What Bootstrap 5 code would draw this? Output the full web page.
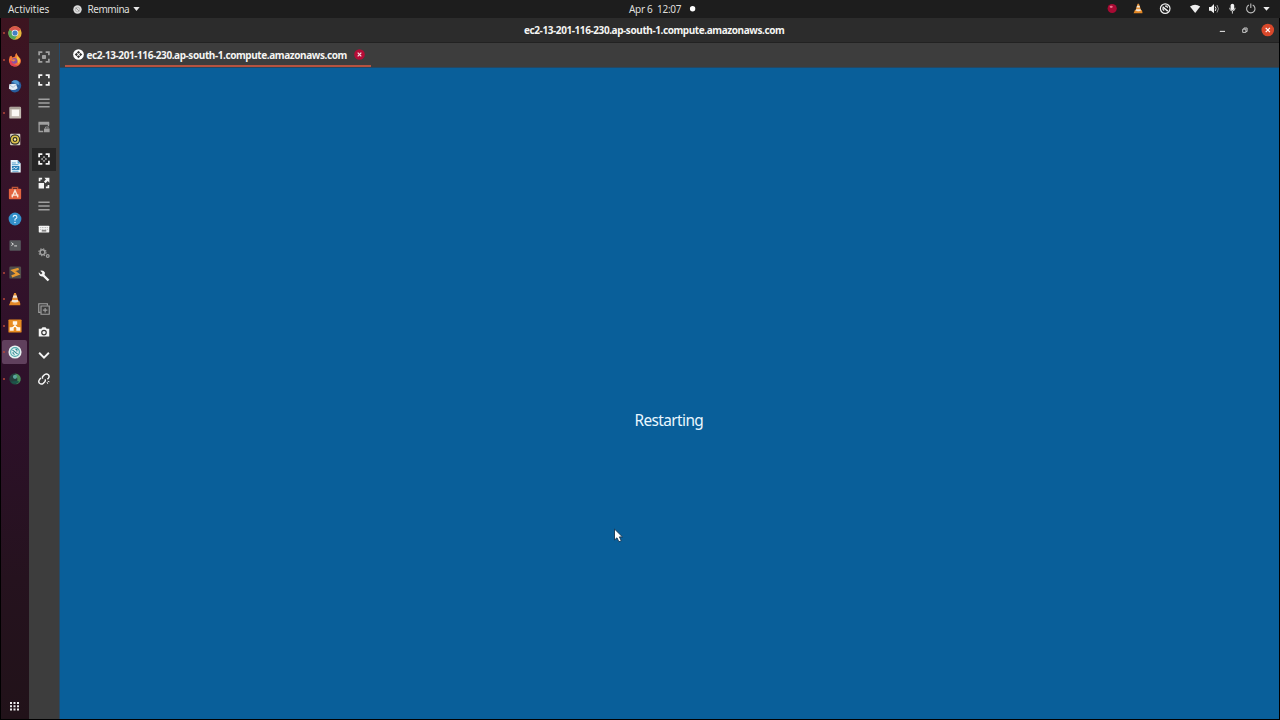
<!DOCTYPE html>
<html lang="en">
<head>
<meta charset="utf-8">
<title>Remmina</title>
<link href="https://cdn.jsdelivr.net/npm/bootstrap@5.3.0/dist/css/bootstrap.min.css" rel="stylesheet">
<style>
body{width:1280px;height:720px;overflow:hidden;background:#000;color:#dfdfdc;font-family:"Noto Sans","Open Sans",sans-serif;font-size:10px;line-height:1}
svg{display:block;flex:none}
.topbar{height:18px;background:#1d1d1d;white-space:nowrap}
.topbar .start{width:620px;padding-left:8px}
.activities{width:65px;letter-spacing:-.03px}
.app-name{margin-left:5.5px;letter-spacing:-.45px}
.clock{padding-left:9px;letter-spacing:-.3px}
.main{height:702px;padding:0 1px 1px}
.dock{width:28px;padding-top:1.6px;background:linear-gradient(#3d1420 0,#35132a 25%,#2d102a 55%,#25121e 80%,#211219 100%)}
.dock-item{height:26.63px;width:28px;padding-right:1px}
.dock-item.running::before{content:"";position:absolute;left:1.5px;top:12.3px;width:2px;height:2px;border-radius:50%;background:#b84738}
.dock-item.active-app::after{content:"";position:absolute;z-index:-1;left:1px;top:1px;width:25px;height:24px;border-radius:2px;background:#60405d}
.dock-item.active-app{z-index:0}
.apps{margin:0 1px 6px 0}
.titlebar{height:25px;background:#2c2c2c;border-bottom:1px solid #222}
.host{font-weight:700;color:#f4f4f2;font-size:10px;letter-spacing:-.41px;white-space:nowrap}
.window-title{padding-left:495px;width:1183px}
.tools{width:31px;background:#3d3d3d;border-right:1px solid #254a68;padding-top:2px}
.tool{height:23.3px;width:30px;color:#f5f5f5}
.tool.off{color:#a0a0a0}
.tool.pressed{background:linear-gradient(#262626,#262626) center/24px 23px no-repeat}
.group-gap{margin-top:9.5px}
.tabs{height:25px;background:#3d3d3d;border-bottom:1px solid #244864}
.remote-tab{width:306px;margin-left:5px;padding:1px 0 0 8px;border-bottom:2px solid #b55340}
.tab-host{margin-left:2.5px}
.tab-close{margin-left:7px}
.screen{background:#095f9a}
.restart{padding-left:574.5px;padding-top:344px;font-size:15.4px;line-height:18px;letter-spacing:-.6px;color:#e9f7ff;font-weight:400}
.pointer{left:553px;top:460px}
</style>
</head>
<body class="d-flex flex-column">
<svg width="0" height="0" class="position-absolute">
<defs>
<g id="corners" fill="none" stroke="currentColor"><path d="M5.8 1.5H1.5V5.8M10.2 1.5H14.5V5.8M1.5 10.2V14.5H5.8M14.5 10.2V14.5H10.2" stroke-width="2.3"/></g>
<g id="bars" stroke="currentColor" stroke-width="1.8"><path d="M.5 3H15.5M.5 8H15.5M.5 13H15.5"/></g>
<g id="cone"><path d="M2 13L3 10H13L14 13V15H1Z" fill="#e38724"/><path d="M7 1H9L12.5 12Q8 14 3.5 12Z" fill="#e79137"/><path d="M6.2 4H9.8L10.6 6.5H5.4ZM4.7 9H11.3L12 11Q8 12.8 4 11Z" fill="#eee5d7"/></g>
</defs>
</svg>

<header class="topbar d-flex align-items-center">
 <div class="start d-flex align-items-center flex-shrink-0">
  <span class="activities">Activities</span>
  <svg width="9" height="9" viewBox="0 0 16 16"><circle cx="8" cy="8" r="7.5" fill="#dcdcdc"/><circle cx="8" cy="8" r="4" fill="none" stroke="#999"/><path d="M5 5l6 6" stroke="#888" stroke-width="1.5"/></svg>
  <span class="app-name">Remmina</span>
  <svg class="ms-1" width="7" height="4" viewBox="0 0 7 4"><path d="M.3 0H6.7L3.5 4Z" fill="#e8e8e8"/></svg>
 </div>
 <span class="clock">Apr 6&nbsp; 12:07</span>
 <svg class="ms-auto" width="595" height="18" viewBox="685 0 595 18">
  <circle cx="692.6" cy="8.8" r="2.7" fill="#fff"/>
  <circle cx="1112.2" cy="8.5" r="4.6" fill="#a70a33"/><ellipse cx="1111.2" cy="6.8" rx="1.6" ry="1.1" fill="#ec6f8a"/>
  <svg x="1132.8" y="3" width="11" height="11" viewBox="0 0 16 16"><use href="#cone"/></svg>
  <g fill="none" stroke="#f0f0f0"><circle cx="1165.2" cy="8.6" r="4.8" stroke-width="1.2"/><path d="M1162.6 6.7l5.2 4.4" stroke-width="1.5"/><path d="M1163 8v1.5l1.2 1M1165 6.2h1.8l.8 1.6" stroke-width="1.2"/></g>
  <path d="M1190 6.4Q1195 3 1200.2 6.4L1195.2 13Z" fill="#eee"/>
  <path d="M1209 7H1211L1214 4V13.3L1211 10.7H1209Z" fill="#f2f2f2"/><path d="M1215.2 6.5Q1216.8 8.7 1215.2 11" fill="none" stroke="#eee"/><path d="M1217 5Q1219.8 8.7 1217 12.5" fill="none" stroke="#999"/>
  <rect x="1230.6" y="3.8" width="3.6" height="6.4" rx="1.8" fill="#f2f2f2"/><path d="M1229.6 7.8Q1229.8 11 1232.4 11T1235.2 7.8M1232.4 11V13.6" fill="none" stroke="#ccc"/>
  <path d="M1248.9 4.9A4.2 4.2 0 1 0 1252.7 4.9M1250.8 3.4V8" fill="none" stroke="#bbb" stroke-width="1.1"/>
  <path d="M1263.3 6.9H1269.7L1266.5 10.7Z" fill="#eee"/>
 </svg>
</header>

<div class="main d-flex">
 <nav class="dock d-flex flex-column align-items-center flex-shrink-0">
  <div class="dock-item running position-relative d-flex align-items-center justify-content-center"><svg width="14" height="14" viewBox="0 0 16 16"><circle cx="8" cy="8" r="7.6" fill="#e7b73b"/><path d="M8 8L1.4 4.2A7.6 7.6 0 0 1 14.7 4.4Z" fill="#d8574c"/><path d="M8 8L1.4 4.2A7.6 7.6 0 0 0 7.5 15.6L11 10Z" fill="#55a75b"/><circle cx="8" cy="8" r="3.8" fill="#eee"/><circle cx="8" cy="8" r="2.9" fill="#437fc3"/></svg></div>
  <div class="dock-item running position-relative d-flex align-items-center justify-content-center"><svg width="14" height="14" viewBox="0 0 16 16"><path d="M2 4L4 3 5 5 8 4Q8 1 10 0 10 3 13 5 16 8 14 12 12 16 7 15.5 1 14 1 8Z" fill="#f17736"/><path d="M10 1Q10 4 13 6 15 9 12 12L10 7Z" fill="#f4c143"/><path d="M2 8Q1 15 8 15.5L12 14Q6 14 4 9Z" fill="#df3f56"/><circle cx="7.5" cy="9" r="3.2" fill="#8752a5"/><path d="M4 8Q7 6 9 8L6 10Z" fill="#ef8b3c"/></svg></div>
  <div class="dock-item d-flex align-items-center justify-content-center"><svg width="14" height="14" viewBox="0 0 16 16"><path d="M4 3Q9-1 14 4 17 9 12 14 7 17 3 13Z" fill="#285d9d"/><path d="M1.5 6L9 5.5 11 10.5Q6 14.5 1 11Z" fill="#e4edf5"/><path d="M4 3Q8 0 12 3L13 7 9 5Z" fill="#539ad2"/><path d="M2 7L6 9.5 9.5 6" fill="none" stroke="#9bb6cf"/></svg></div>
  <div class="dock-item running position-relative d-flex align-items-center justify-content-center"><svg width="14" height="13" viewBox="0 0 16 16"><rect x="1" y="1" width="14.5" height="14.5" rx="1.5" fill="#c2bab1"/><path d="M1.5 2.5H15" stroke="#857971"/><rect x="4" y="4.5" width="9" height="8" fill="#faf8f4"/></svg></div>
  <div class="dock-item d-flex align-items-center justify-content-center"><svg width="14" height="13" viewBox="0 0 16 16"><rect x="2" y="1" width="12.5" height="14" rx="1" fill="#d8d3c7"/><circle cx="8" cy="8" r="6.4" fill="#302e28"/><circle cx="8" cy="8" r="4" fill="none" stroke="#dfc44c" stroke-width="2"/><circle cx="8" cy="8" r="1.5" fill="#fff1a1"/></svg></div>
  <div class="dock-item d-flex align-items-center justify-content-center"><svg width="14" height="14" viewBox="0 0 16 16"><path d="M3 1H11L14.5 5V15.5H3Z" fill="#e6f4fb"/><path d="M11 1V5H14.5Z" fill="#4b9bc9"/><path d="M4.5 4.5H9M4.5 6.5H12M5 14H12" stroke="#4897c7"/><rect x="4.5" y="8" width="8.5" height="4.5" fill="#257fb8"/><path d="M5 11.5L7 9.5 9 11 11 9.5" fill="none" stroke="#fff"/></svg></div>
  <div class="dock-item d-flex align-items-center justify-content-center"><svg width="14" height="14" viewBox="0 0 16 16"><path d="M5 4V1.5H11V4" fill="none" stroke="#bd5437" stroke-width="1.5"/><rect x="1" y="3" width="14" height="12" rx="1" fill="#e3633f"/><path d="M4.5 13L8 5 11.5 13M4 10.5H12" fill="none" stroke="#f7e6d9" stroke-width="1.5"/></svg></div>
  <div class="dock-item d-flex align-items-center justify-content-center"><svg width="14" height="14" viewBox="0 0 16 16"><circle cx="8" cy="8" r="7.3" fill="#328fc9"/><path d="M5.8 6Q6 3.8 8 3.8T10.2 6Q10.2 7 8 8.4V10" fill="none" stroke="#dff3ff" stroke-width="1.3"/><circle cx="8" cy="12" r=".9" fill="#dff3ff"/></svg></div>
  <div class="dock-item d-flex align-items-center justify-content-center"><svg width="14" height="13" viewBox="0 0 16 16"><rect x="1.2" y="1.5" width="14" height="13" rx="1" fill="#55575b"/><path d="M3.5 4.5L6 6.3 3.5 8M7 8.5H10.5" fill="none" stroke="#ddd" stroke-width="1.2"/></svg></div>
  <div class="dock-item running position-relative d-flex align-items-center justify-content-center"><svg width="14" height="13" viewBox="0 0 16 16"><rect x="1" y=".5" width="14.5" height="15" rx="1.5" fill="#514e4c"/><path d="M12.5 3.5L5.5 5.5 11.5 10 4 12.8" fill="none" stroke="#e89a31" stroke-width="3"/></svg></div>
  <div class="dock-item running position-relative d-flex align-items-center justify-content-center"><svg width="14" height="14" viewBox="0 0 16 16"><use href="#cone"/></svg></div>
  <div class="dock-item running position-relative d-flex align-items-center justify-content-center"><svg width="14" height="14" viewBox="0 0 16 16"><rect x=".5" y=".5" width="15" height="15" rx="1" fill="#e88b20"/><path d="M8 5V8L4 11M8 8L12 11" fill="none" stroke="#fff" stroke-width="1.5"/><path d="M5.5 2.5H10.5V6.5H5.5ZM2 9.5H6.5V13.5H2ZM9.5 9.5H14V13.5H9.5Z" fill="#fff5e6"/></svg></div>
  <div class="dock-item running active-app position-relative d-flex align-items-center justify-content-center"><svg width="14" height="14" viewBox="0 0 16 16"><circle cx="8" cy="8" r="7.5" fill="#e8f3f2"/><circle cx="8" cy="8" r="5" fill="#e8f3f2" stroke="#4ea9ad" stroke-width="1.3"/><path d="M5 5.5L11 10.5M5.8 8V9.5L7.5 11M8.5 5H10.2V7.5" fill="none" stroke="#338b94" stroke-width="1.2"/></svg></div>
  <div class="dock-item running position-relative d-flex align-items-center justify-content-center"><svg width="14" height="14" viewBox="0 0 16 16"><circle cx="8" cy="8" r="6.5" fill="#243f3d"/><path d="M8 2A6 6 0 0 1 9 14Q13 8 8 2Z" fill="#4a8b58"/><circle cx="8" cy="5.5" r="2.4" fill="#5aa69c"/><path d="M3 11Q8 16 13 11L10 10Z" fill="#1c5549"/></svg></div>
  <svg class="apps mt-auto" width="11" height="14" viewBox="0 0 11 14" fill="#eee"><path d="M1 3h2v2H1zm3.5 0h2v2h-2zM8 3h2v2H8zM1 6.2h2v2H1zm3.5 0h2v2h-2zM8 6.2h2v2H8zM1 9.5h2v2H1zm3.5 0h2v2h-2zM8 9.5h2v2H8z"/></svg>
 </nav>

 <section class="flex-grow-1 d-flex flex-column">
  <div class="titlebar d-flex align-items-center">
   <div class="host window-title">ec2-13-201-116-230.ap-south-1.compute.amazonaws.com</div>
   <svg width="67" height="24" viewBox="1212 18 67 24"><path d="M1219.8 31.4H1225" stroke="#ddd" stroke-width="1.1"/><path d="M1242.7 29.2H1245.9V32.4H1242.7ZM1243.9 29V28H1247.1V31.5H1246" fill="none" stroke="#c7c7c7"/><circle cx="1267.8" cy="30" r="6.3" fill="#d9482b"/><path d="M1265.7 27.9L1269.9 32.1M1269.9 27.9L1265.7 32.1" stroke="#fff" stroke-width="1.2"/></svg>
  </div>
  <div class="flex-grow-1 d-flex">
   <aside class="tools d-flex flex-column flex-shrink-0">
    <div class="tool off d-flex align-items-center justify-content-center"><svg width="12" height="12" viewBox="0 0 16 16"><use href="#corners"/><rect x="5.3" y="5.3" width="5.4" height="5.4" rx="1" fill="currentColor"/></svg></div>
    <div class="tool d-flex align-items-center justify-content-center"><svg width="12" height="12" viewBox="0 0 16 16"><use href="#corners"/></svg></div>
    <div class="tool off d-flex align-items-center justify-content-center"><svg width="12" height="12" viewBox="0 0 16 16"><use href="#bars"/></svg></div>
    <div class="tool off d-flex align-items-center justify-content-center"><svg width="12" height="12" viewBox="0 0 16 16"><path d="M7 14H1.5V2H14V7" fill="none" stroke="currentColor" stroke-width="1.7"/><path d="M1 2H15V5H1ZM8 10H15.5V15H8Z" fill="currentColor"/><path d="M10 10V8H13.5V10" fill="none" stroke="currentColor"/></svg></div>
    <div class="tool pressed group-gap d-flex align-items-center justify-content-center"><svg width="12" height="12" viewBox="0 0 16 16"><use href="#corners"/><path d="M8 4L9.6 6H6.4ZM8 12L9.6 10H6.4ZM4 8L6 6.4V9.6ZM12 8L10 6.4V9.6Z" fill="currentColor"/></svg></div>
    <div class="tool d-flex align-items-center justify-content-center"><svg width="12" height="12" viewBox="0 0 16 16" fill="currentColor"><path d="M.8 8H8V15.2H.8ZM8.5 1H15.2V7.5L13 5.4 10 8.2 8 6 10.6 3.2ZM1 1H5.5V3.2H3.2V5.5H1ZM15 10.5V15H10.5V12.8H12.8V10.5Z"/></svg></div>
    <div class="tool off d-flex align-items-center justify-content-center"><svg width="12" height="12" viewBox="0 0 16 16"><use href="#bars"/></svg></div>
    <div class="tool d-flex align-items-center justify-content-center"><svg width="12" height="12" viewBox="0 0 16 16"><rect x="1" y="3.5" width="14" height="9" rx=".8" fill="currentColor"/><path d="M3 6H13.5M3 8.5H13.5" stroke="#999" stroke-dasharray="1.2 1"/><path d="M5 10.5H11" stroke="#444" stroke-width="1.4"/></svg></div>
    <div class="tool off d-flex align-items-center justify-content-center"><svg width="12" height="12" viewBox="0 0 16 16" fill="none" stroke="currentColor"><circle cx="6" cy="7" r="3.2" stroke-width="2"/><circle cx="6" cy="7" r="4.8" stroke-width="1.4" stroke-dasharray="1.9 1.87"/><circle cx="13" cy="12" r="1.8" stroke-width="1.7"/></svg></div>
    <div class="tool d-flex align-items-center justify-content-center"><svg width="12" height="12" viewBox="0 0 16 16"><path d="M6 6L14 14" stroke="currentColor" stroke-width="3.2"/><path d="M1 3L4 6 6 4 3 1Q7-.5 9 3 10 7 6 8.5 2 9 1 5Z" fill="currentColor"/></svg></div>
    <div class="tool off group-gap d-flex align-items-center justify-content-center"><svg width="12" height="12" viewBox="0 0 16 16" fill="none" stroke="currentColor" stroke-width="1.5"><path d="M3 12.5H1V1H12.5V3M4 4H15V15H4ZM9.5 6.5V12.5M6.5 9.5H12.5"/></svg></div>
    <div class="tool d-flex align-items-center justify-content-center"><svg width="12" height="12" viewBox="0 0 16 16"><path d="M1 3.5H4.5L6 1.7H10L11.5 3.5H15V14H1Z" fill="currentColor"/><circle cx="8" cy="8.7" r="3" fill="none" stroke="#393939" stroke-width="1.6"/></svg></div>
    <div class="tool d-flex align-items-center justify-content-center"><svg width="12" height="12" viewBox="0 0 16 16"><path d="M1.5 5L8 11.5 14.5 5" fill="none" stroke="currentColor" stroke-width="2.5"/></svg></div>
    <div class="tool d-flex align-items-center justify-content-center"><svg width="12" height="12" viewBox="0 0 16 16" fill="none" stroke="currentColor" stroke-width="1.9"><path d="M6.5 7.5Q5 5.5 7 3.8L9 2Q11.5.4 13.8 2.4 15.8 4.8 13.8 7L12.5 8.2M4 6.8L2 8.8Q0 11.3 2 13.7 4.5 15.7 7 13.8L8.8 12Q10.5 10.3 9.3 8.5"/><path d="M12 12l1 2.5M13 11l2.3.7" stroke-width="1.2"/></svg></div>
   </aside>
   <main class="flex-grow-1 d-flex flex-column">
    <div class="tabs d-flex">
     <div class="remote-tab d-flex align-items-center">
      <svg width="11" height="11" viewBox="0 0 16 16"><circle cx="8" cy="8" r="7.8" fill="#fff"/><path d="M8 2.5L10.5 5.2 8 7 5.5 5.2ZM8 13.5L10.5 10.8 8 9 5.5 10.8ZM2.5 8L5.2 5.5 7 8 5.2 10.5ZM13.5 8L10.8 5.5 9 8 10.8 10.5Z" fill="#373737"/></svg>
      <span class="host tab-host">ec2-13-201-116-230.ap-south-1.compute.amazonaws.com</span>
      <svg class="tab-close" width="11" height="11" viewBox="0 0 11 11"><circle cx="5.5" cy="5.5" r="5.3" fill="#b50c36"/><path d="M3.7 3.7L7.3 7.3M7.3 3.7L3.7 7.3" stroke="#f4dbe1" stroke-width="1.2"/></svg>
     </div>
    </div>
    <div class="screen flex-grow-1 position-relative">
     <div class="restart">Restarting</div>
     <svg class="pointer position-absolute" width="11" height="15" viewBox="0 0 11 15"><path d="M1.5 1V12L4 9.8 5.9 13.8 8.3 12.7 6.4 8.9H9.5Z" fill="#fff" stroke="#173650" stroke-width=".9"/></svg>
    </div>
   </main>
  </div>
 </section>
</div>
<script src="https://cdn.jsdelivr.net/npm/bootstrap@5.3.0/dist/js/bootstrap.bundle.min.js"></script>
</body>
</html>
